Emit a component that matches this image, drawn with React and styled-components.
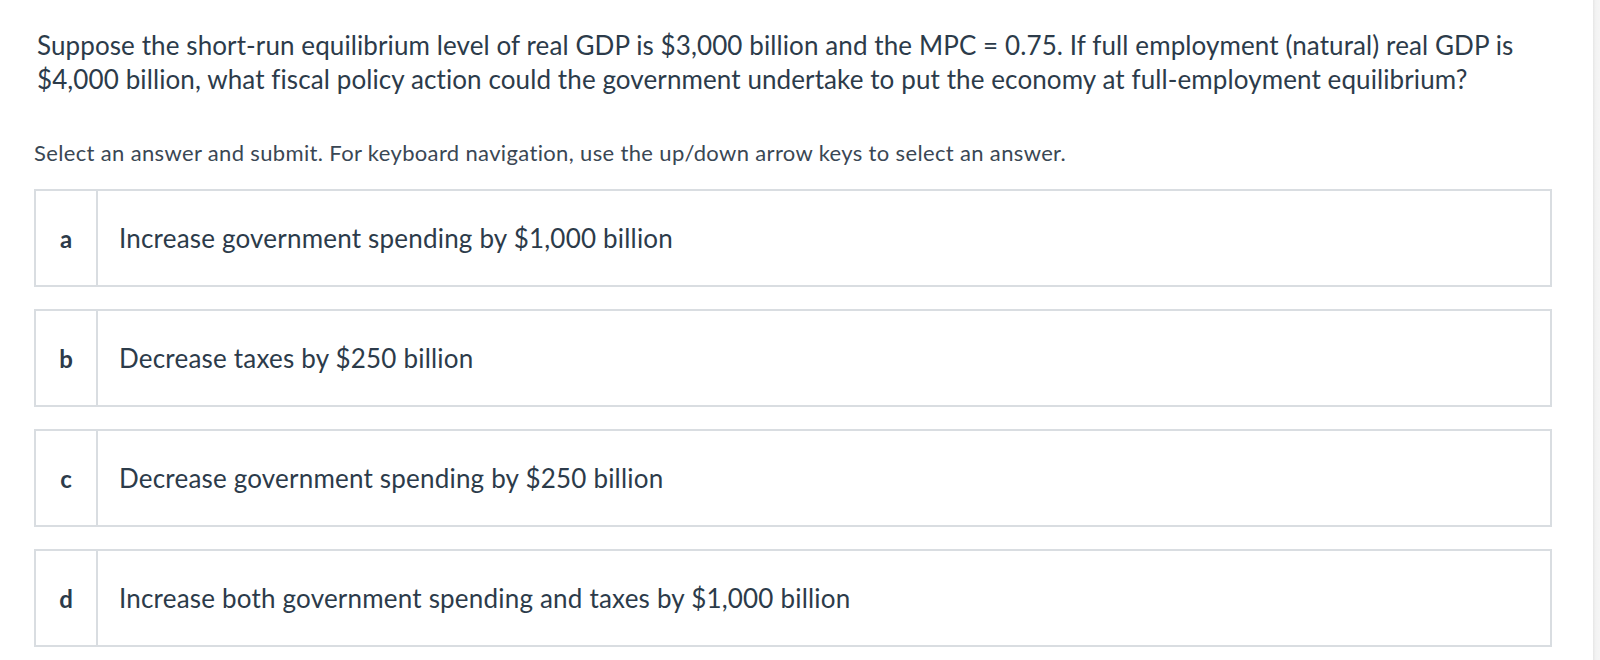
import React from "react";
import styled, { createGlobalStyle } from "styled-components";

const Global = createGlobalStyle`
  html, body { margin: 0; padding: 0; background: #ffffff; }
  body { font-family: Lato, "Liberation Sans", sans-serif; color: #2c3b4a; }
`;

const Page = styled.div`
  display: flex;
  width: 1600px;
  height: 660px;
  overflow: hidden;
`;

const Main = styled.main`
  flex: 1;
  padding: 28px 41px 0 34px;
  box-sizing: border-box;
`;

const ScrollTrack = styled.div`
  width: 7px;
  background: linear-gradient(to right, #e6e6e6, #f3f3f3 40%, #f5f5f5);
`;

const Question = styled.p`
  margin: 0 0 0 3px;
  font-size: 26px;
  letter-spacing: 0.1px;
  line-height: 34px;
  color: #2c3b4a;
`;

const Instruction = styled.p`
  margin: 43px 0 0 0;
  font-size: 22px;
  letter-spacing: 0.35px;
  line-height: 28px;
  color: #3a4754;
`;

const Options = styled.ul`
  list-style: none;
  margin: 22px 0 0 0;
  padding: 0;
  display: flex;
  flex-direction: column;
  gap: 22px;
`;

const Option = styled.li`
  display: flex;
  height: 98px;
  box-sizing: border-box;
  border: 2px solid #d9dde1;
  background: #fff;
`;

const Letter = styled.span`
  width: 60px;
  flex: none;
  display: flex;
  align-items: center;
  justify-content: center;
  border-right: 2px solid #d9dde1;
  font-size: 24px;
  font-weight: 700;
  color: #2c3b4a;
`;

const Text = styled.span`
  display: flex;
  align-items: center;
  padding-left: 21px;
  font-size: 26px;
  letter-spacing: 0.2px;
  color: #2c3b4a;
`;

const answers = [
  ["a", "Increase government spending by $1,000 billion"],
  ["b", "Decrease taxes by $250 billion"],
  ["c", "Decrease government spending by $250 billion"],
  ["d", "Increase both government spending and taxes by $1,000 billion"],
];

export default function App() {
  return (
    <>
      <Global />
      <Page>
        <Main>
          <Question>
            Suppose the short-run equilibrium level of real GDP is $3,000 billion and the MPC = 0.75. If full employment (natural) real GDP is $4,000 billion, what fiscal policy action could the government undertake to put the economy at full-employment equilibrium?
          </Question>
          <Instruction>
            Select an answer and submit. For keyboard navigation, use the up/down arrow keys to select an answer.
          </Instruction>
          <Options>
            {answers.map(([l, t]) => (
              <Option key={l}>
                <Letter>{l}</Letter>
                <Text>{t}</Text>
              </Option>
            ))}
          </Options>
        </Main>
        <ScrollTrack />
      </Page>
    </>
  );
}
